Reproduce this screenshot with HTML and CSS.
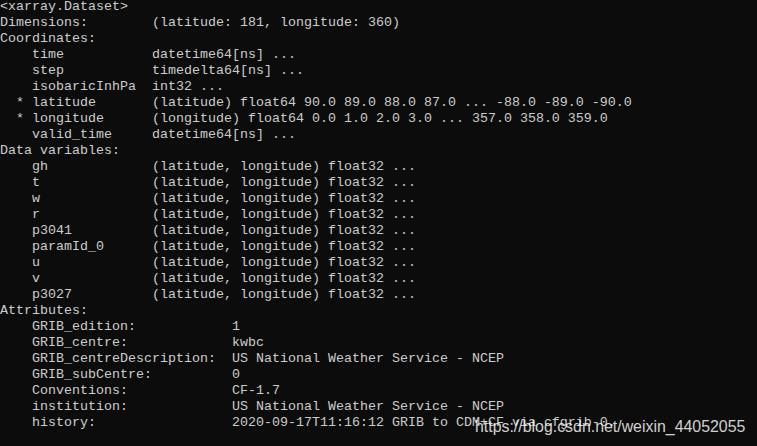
FILE: index.html
```html
<!DOCTYPE html>
<html>
<head>
<meta charset="utf-8">
<link rel="stylesheet" href="styles.css">
</head>
<body>
<div class="console">
<pre class="out">&lt;xarray.Dataset&gt;
Dimensions:        (latitude: 181, longitude: 360)
Coordinates:
    time           datetime64[ns] ...
    step           timedelta64[ns] ...
    isobaricInhPa  int32 ...
  * latitude       (latitude) float64 90.0 89.0 88.0 87.0 ... -88.0 -89.0 -90.0
  * longitude      (longitude) float64 0.0 1.0 2.0 3.0 ... 357.0 358.0 359.0
    valid_time     datetime64[ns] ...
Data variables:
    gh             (latitude, longitude) float32 ...
    t              (latitude, longitude) float32 ...
    w              (latitude, longitude) float32 ...
    r              (latitude, longitude) float32 ...
    p3041          (latitude, longitude) float32 ...
    paramId_0      (latitude, longitude) float32 ...
    u              (latitude, longitude) float32 ...
    v              (latitude, longitude) float32 ...
    p3027          (latitude, longitude) float32 ...
Attributes:
    GRIB_edition:            1
    GRIB_centre:             kwbc
    GRIB_centreDescription:  US National Weather Service - NCEP
    GRIB_subCentre:          0
    Conventions:             CF-1.7
    institution:             US National Weather Service - NCEP
    history:                 2020-09-17T11:16:12 GRIB to CDM+CF via cfgrib-0.</pre>
<div class="watermark">https://blog.csdn.net/weixin_44052055</div>
</div>
</body>
</html>
```
FILE: styles.css
```css
html, body {
  margin: 0;
  padding: 0;
  background: #0c0c0c;
}
.console {
  position: relative;
  width: 757px;
  height: 446px;
  overflow: hidden;
  background: #0c0c0c;
}
.out {
  margin: 0;
  padding: 0;
  position: relative;
  top: -1px;
  font-family: "Liberation Mono", "DejaVu Sans Mono", monospace;
  font-size: 13.333px;
  line-height: 16px;
  color: #cccccc;
  white-space: pre;
}
.watermark {
  position: absolute;
  left: 475px;
  top: 418px;
  font-family: "Liberation Sans", Arial, sans-serif;
  font-size: 15.9px;
  line-height: 18px;
  color: rgba(255, 255, 255, 0.82);
  white-space: nowrap;
}
```
